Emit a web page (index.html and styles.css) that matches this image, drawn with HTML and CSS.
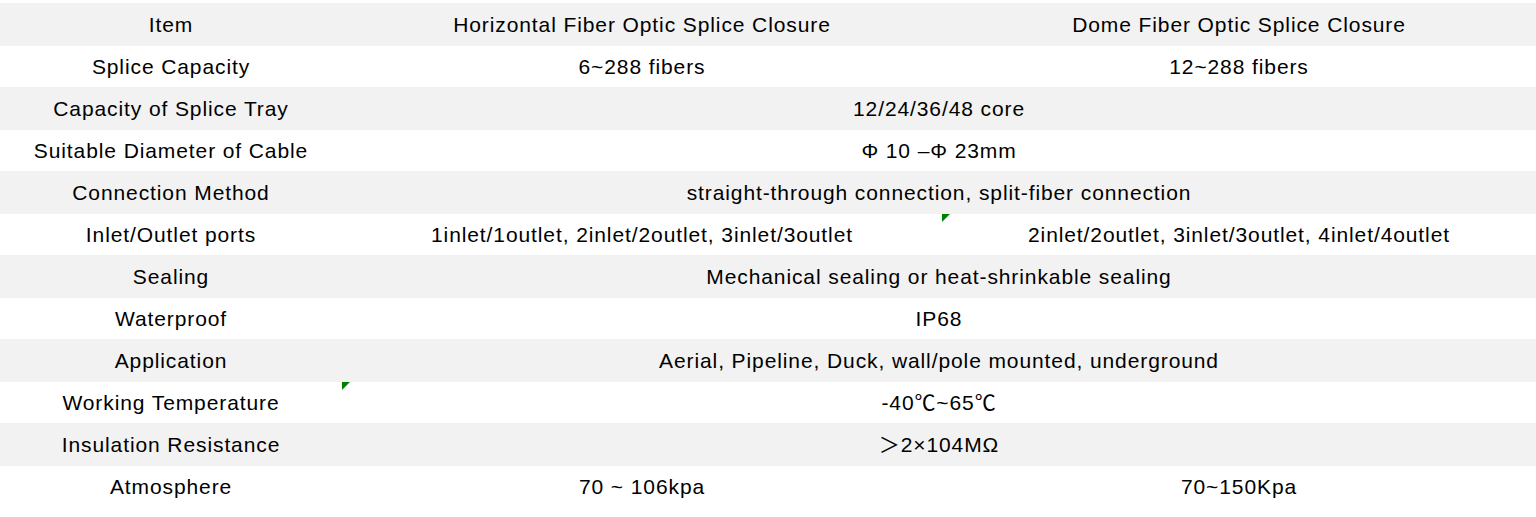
FILE: index.html
```html
<!DOCTYPE html>
<html lang="en">
<head>
<meta charset="utf-8">
<title>Splice Closure Specifications</title>
<link rel="stylesheet" href="styles.css">
</head>
<body>
<table class="spec">
  <colgroup>
    <col class="c-item">
    <col class="c-h">
    <col class="c-d">
  </colgroup>
  <tbody>
    <tr><td>Item</td><td>Horizontal Fiber Optic Splice Closure</td><td>Dome Fiber Optic Splice Closure</td></tr>
    <tr><td>Splice Capacity</td><td>6~288 fibers</td><td>12~288 fibers</td></tr>
    <tr><td>Capacity of Splice Tray</td><td colspan="2">12/24/36/48 core</td></tr>
    <tr><td>Suitable Diameter of Cable</td><td colspan="2">Φ 10 –Φ 23mm</td></tr>
    <tr><td>Connection Method</td><td colspan="2">straight-through connection, split-fiber connection</td></tr>
    <tr><td>Inlet/Outlet ports</td><td>1inlet/1outlet, 2inlet/2outlet, 3inlet/3outlet</td><td class="marked"><span class="flag"></span>2inlet/2outlet, 3inlet/3outlet, 4inlet/4outlet</td></tr>
    <tr><td>Sealing</td><td colspan="2">Mechanical sealing or heat-shrinkable sealing</td></tr>
    <tr><td>Waterproof</td><td colspan="2">IP68</td></tr>
    <tr><td>Application</td><td colspan="2">Aerial, Pipeline, Duck, wall/pole mounted, underground</td></tr>
    <tr><td>Working Temperature</td><td colspan="2" class="marked"><span class="flag"></span>-40℃~65℃</td></tr>
    <tr><td>Insulation Resistance</td><td colspan="2">＞2×104MΩ</td></tr>
    <tr><td>Atmosphere</td><td>70 ~ 106kpa</td><td>70~150Kpa</td></tr>
  </tbody>
</table>
</body>
</html>
```

FILE: styles.css
```css
html, body {
  margin: 0;
  padding: 0;
  background: #ffffff;
}

body {
  padding-top: 3px;
  font-family: "Liberation Sans", Arial, "Noto Sans CJK SC", sans-serif;
  font-size: 21px;
  color: #000000;
}

.spec {
  width: 1536px;
  border-collapse: collapse;
  table-layout: fixed;
}

.c-item { width: 342px; }
.c-h { width: 600px; }
.c-d { width: 594px; }

.spec td {
  padding: 0;
  text-align: center;
  vertical-align: middle;
  letter-spacing: 0.9px;
  white-space: nowrap;
  line-height: 24px;
}

.spec tr:nth-child(odd) {
  background: #f2f2f2;
  height: 43px;
}

.spec tr:nth-child(even) {
  background: #ffffff;
  height: 41px;
}

.marked {
  position: relative;
}

.flag {
  position: absolute;
  top: 0;
  left: 0;
  width: 0;
  height: 0;
  border-top: 8px solid #008000;
  border-right: 8px solid transparent;
}
```
